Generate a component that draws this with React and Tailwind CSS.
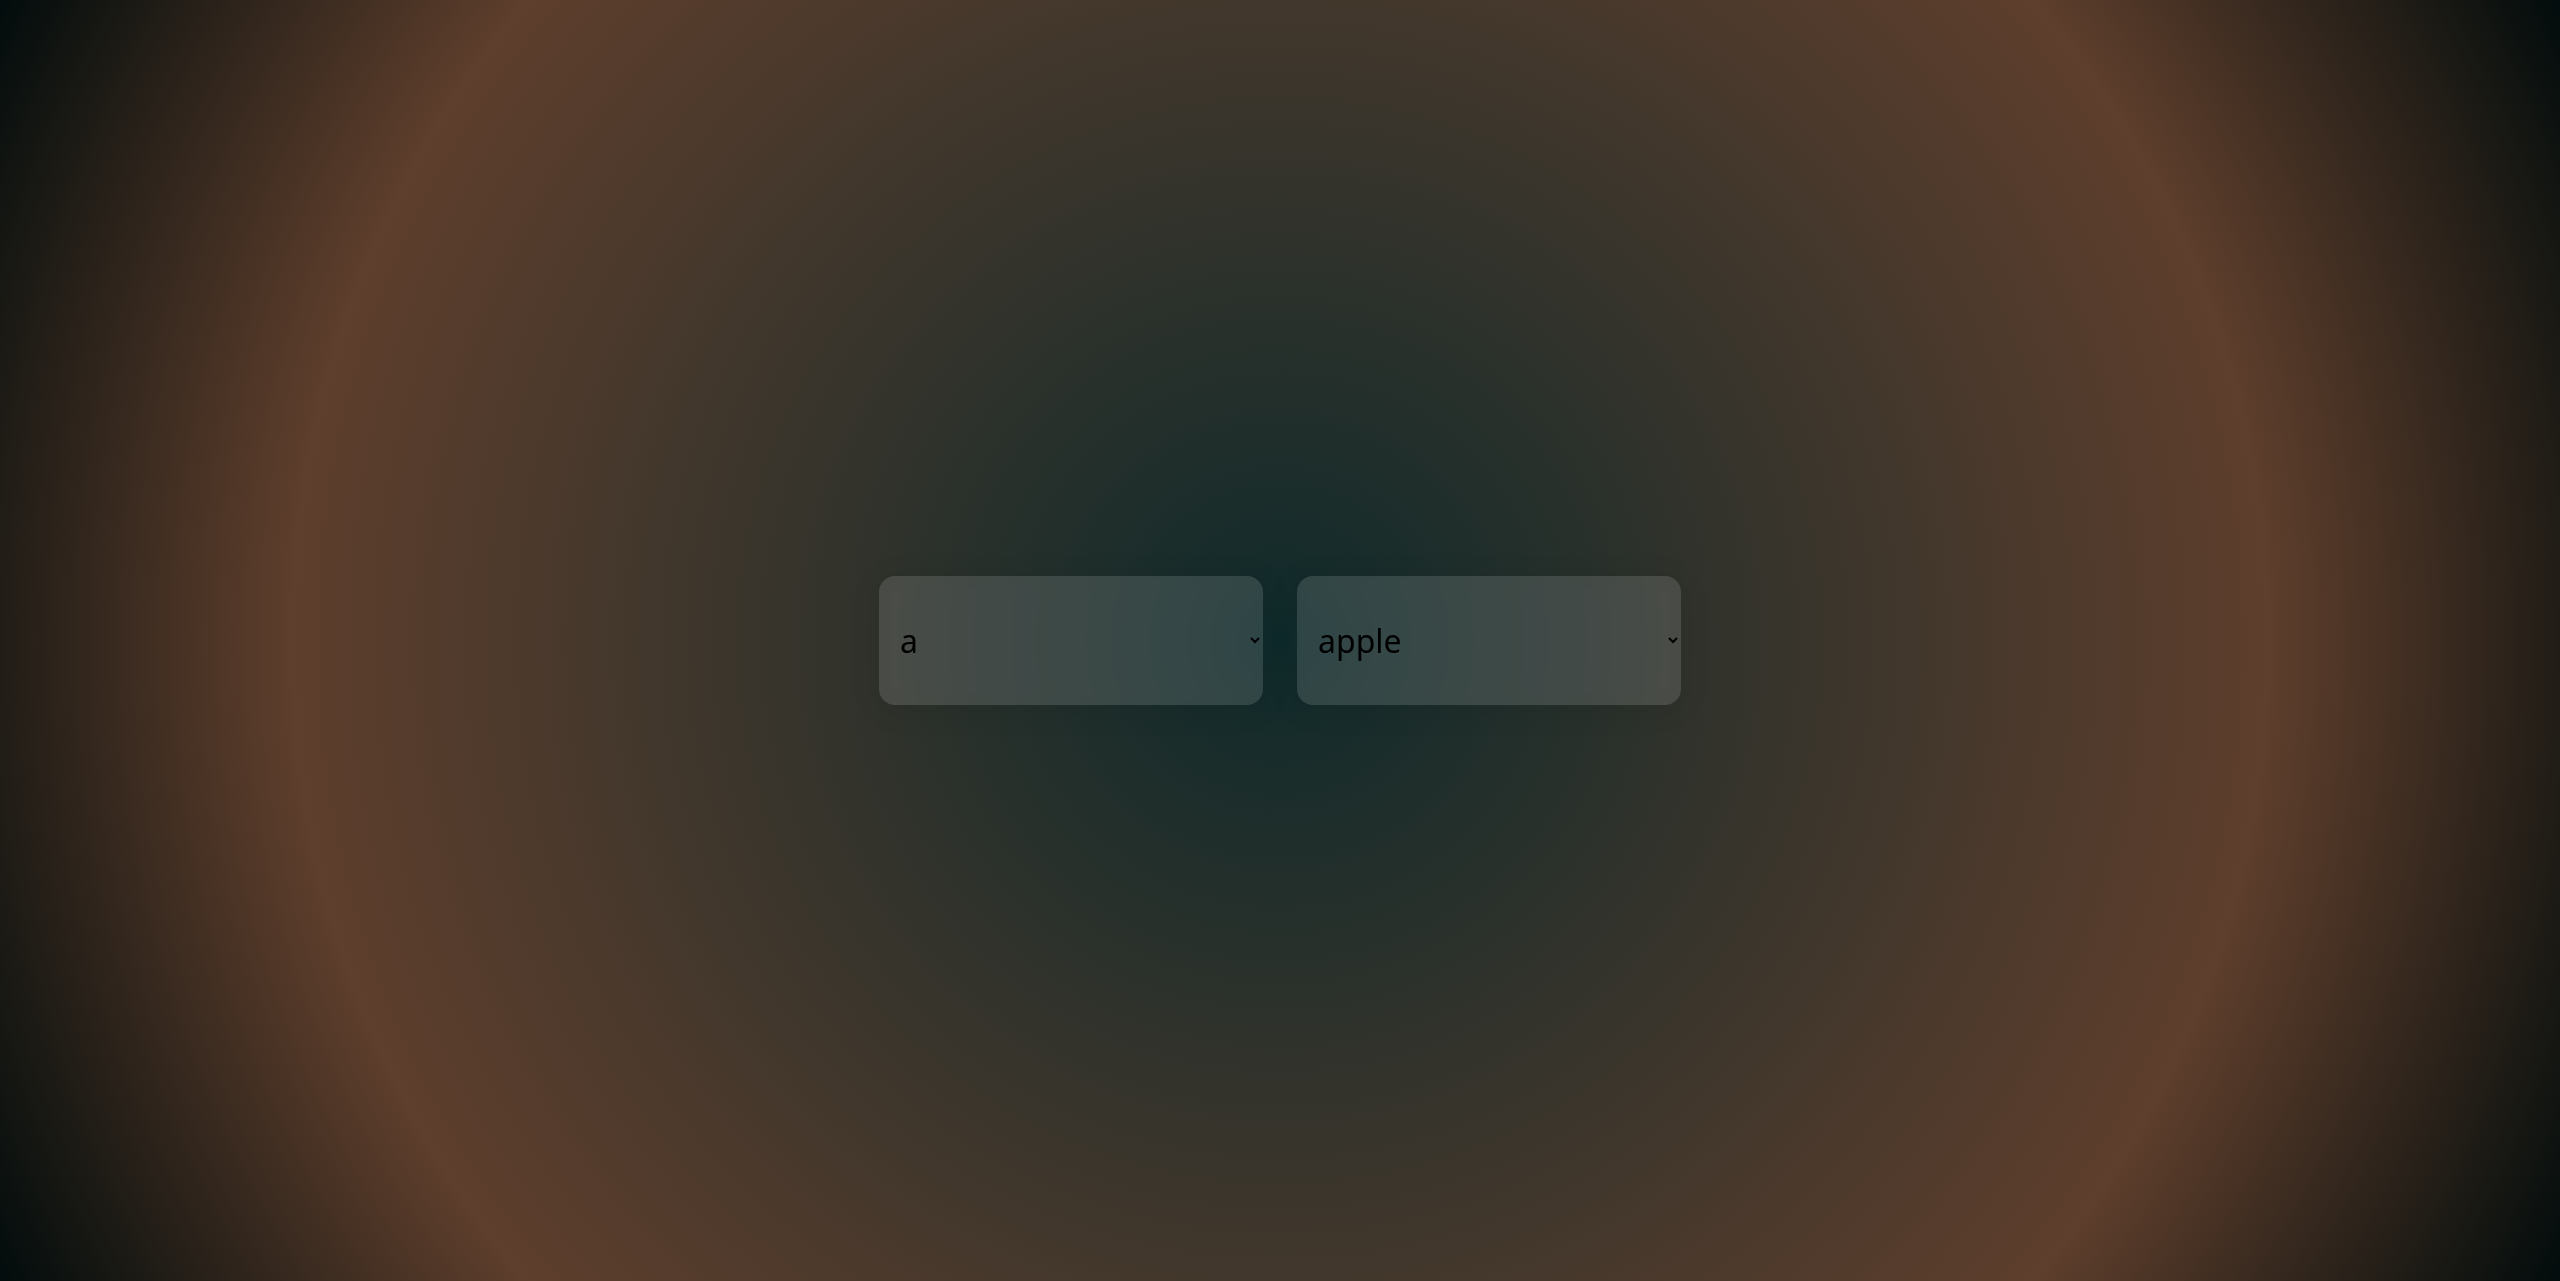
import React from "react";

export default function App() {
  return (
    <div className="w-full h-screen flex items-center justify-center gap-[34px] bg-[radial-gradient(circle,#0f2a2b_0%,#5e3e2c_69%,#020c0c_100%)]">
      <select
        defaultValue="a"
        className="w-[384px] h-[129px] pl-[17px] rounded-2xl bg-white/[0.13] text-black text-[32px] font-['Noto_Sans',sans-serif] shadow-[0_4px_30px_rgba(0,0,0,0.1)] backdrop-blur-[5px] outline-none border-0"
      >
        <option value="a">a</option>
        <option value="b">b</option>
        <option value="c">c</option>
      </select>
      <select
        defaultValue="apple"
        className="w-[384px] h-[129px] pl-[17px] rounded-2xl bg-white/[0.13] text-black text-[32px] font-['Noto_Sans',sans-serif] shadow-[0_4px_30px_rgba(0,0,0,0.1)] backdrop-blur-[5px] outline-none border-0"
      >
        <option value="apple">apple</option>
        <option value="banana">banana</option>
        <option value="cherry">cherry</option>
      </select>
    </div>
  );
}
